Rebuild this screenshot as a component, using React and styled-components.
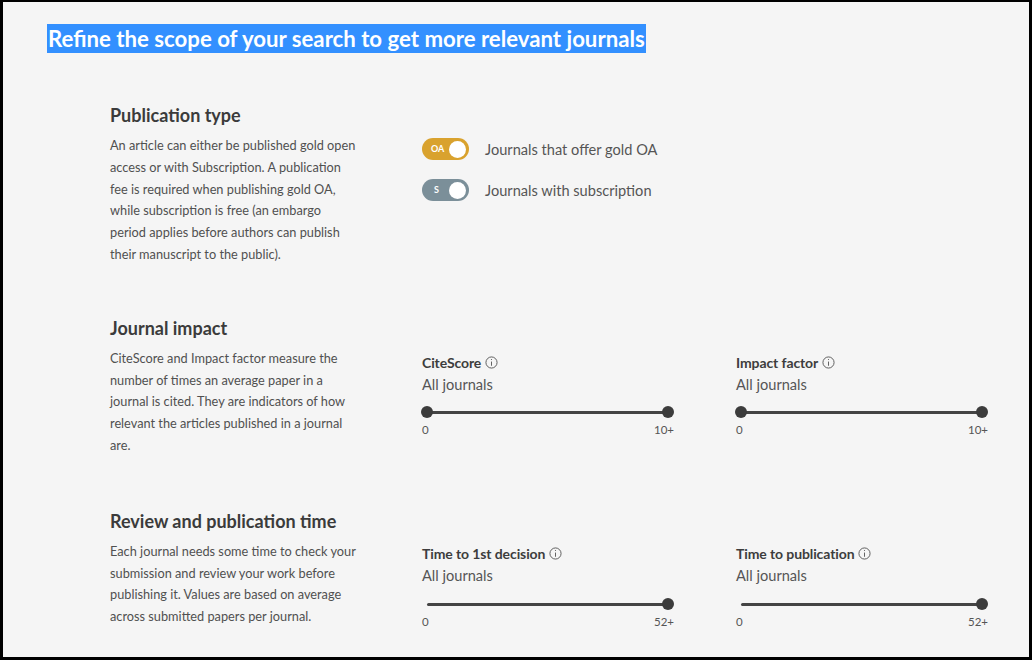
import React from 'react';
import styled, { createGlobalStyle } from 'styled-components';

const GlobalStyle = createGlobalStyle`
  html, body {
    margin: 0;
    padding: 0;
    background: #000;
  }
  body {
    font-family: Lato, "Open Sans", sans-serif;
  }
`;

const Frame = styled.div`
  box-sizing: border-box;
  width: 1032px;
  height: 660px;
  border: 3px solid #000;
  border-top-width: 2px;
  background: #f5f5f5;
  overflow: hidden;
  padding: 22px 0 0 44px;
`;

const Banner = styled.h1`
  display: inline-block;
  margin: 0;
  padding: 0 1px;
  height: 29px;
  line-height: 29px;
  background: #3390ff;
  color: #fff;
  font-family: Lato, sans-serif;
  font-size: 22.2px;
  font-weight: 700;
  letter-spacing: 0;
`;

const Sections = styled.div`
  display: flex;
  flex-direction: column;
  padding: 50px 0 0 63px;
`;

const Section = styled.section`
  display: grid;
  grid-template-columns: 248px 1fr;
  column-gap: 64px;
  margin-bottom: ${p => p.$gap || 0}px;
`;

const SectionTitle = styled.h2`
  grid-column: 1 / -1;
  margin: 0 0 8px;
  font-size: 18px;
  line-height: 24px;
  font-weight: 700;
  color: #3b3b3b;
`;

const Description = styled.p`
  margin: 0;
  font-size: 12.75px;
  line-height: 21.8px;
  color: #505050;
`;

const ToggleList = styled.div`
  display: flex;
  flex-direction: column;
  gap: 19px;
  padding-top: 3px;
`;

const ToggleRow = styled.label`
  display: flex;
  align-items: center;
  gap: 16px;
  font-size: 14.6px;
  color: #555;
`;

const Toggle = styled.span`
  position: relative;
  box-sizing: border-box;
  width: 47px;
  height: 22px;
  border-radius: 11px;
  background: ${p => p.$color};
  color: #fff;
  font-size: 9px;
  font-weight: 700;
  line-height: 22px;
  padding-left: ${p => p.$pad}px;

  &::after {
    content: '';
    position: absolute;
    right: 3px;
    top: 2.5px;
    width: 17px;
    height: 17px;
    border-radius: 50%;
    background: #fff;
  }
`;

const Filters = styled.div`
  display: grid;
  grid-template-columns: 253px 253px;
  column-gap: 61px;
  padding-top: ${p => p.$offset}px;
`;

const Filter = styled.div`
  display: flex;
  flex-direction: column;
`;

const FilterLabel = styled.div`
  display: flex;
  align-items: center;
  gap: 4px;
  font-size: 14px;
  line-height: 20px;
  font-weight: 700;
  color: #3d3d3d;
  letter-spacing: -0.1px;
`;

const FilterValue = styled.div`
  font-size: 14.6px;
  line-height: 23px;
  color: #555;
`;

const Track = styled.div`
  position: relative;
  margin: ${p => p.$space}px 7px 0 5px;
  height: 3px;
  border-radius: 2px;
  background: #444;
`;

const Thumb = styled.span`
  position: absolute;
  top: -4.5px;
  ${p => (p.$side === 'left' ? 'left: -6px;' : 'right: -6px;')}
  width: 12px;
  height: 12px;
  border-radius: 50%;
  background: #3c3c3c;
`;

const Scale = styled.div`
  display: flex;
  justify-content: space-between;
  margin-top: 9px;
  padding-right: 1px;
  font-size: 11.5px;
  color: #555;
`;

const InfoIcon = () => (
  <svg width="13" height="13" viewBox="0 0 14 14" fill="none" stroke="#555" strokeWidth="1">
    <circle cx="7" cy="7" r="6" />
    <line x1="7" y1="6" x2="7" y2="10.5" />
    <circle cx="7" cy="3.8" r="0.6" fill="#555" stroke="none" />
  </svg>
);

const RangeFilter = ({ label, max, showMin = true, space = 15 }) => (
  <Filter>
    <FilterLabel>
      {label}
      <InfoIcon />
    </FilterLabel>
    <FilterValue>All journals</FilterValue>
    <Track $space={space}>
      {showMin && <Thumb $side="left" />}
      <Thumb $side="right" />
    </Track>
    <Scale>
      <span>0</span>
      <span>{max}</span>
    </Scale>
  </Filter>
);

const App = () => (
  <>
    <GlobalStyle />
    <Frame>
      <Banner>Refine the scope of your search to get more relevant journals</Banner>
      <Sections>
        <Section $gap={50}>
          <SectionTitle>Publication type</SectionTitle>
          <Description>
            An article can either be published gold open access or with Subscription. A
            publication fee is required when publishing gold OA, while subscription is free (an
            embargo period applies before authors can publish their manuscript to the public).
          </Description>
          <ToggleList>
            <ToggleRow>
              <Toggle $color="#d9a22e" $pad={9}>OA</Toggle>
              Journals that offer gold OA
            </ToggleRow>
            <ToggleRow>
              <Toggle $color="#7b8f99" $pad={12}>S</Toggle>
              Journals with subscription
            </ToggleRow>
          </ToggleList>
        </Section>

        <Section $gap={52}>
          <SectionTitle>Journal impact</SectionTitle>
          <Description>
            CiteScore and Impact factor measure the number of times an average paper in a
            journal is cited. They are indicators of how relevant the articles published in a
            journal are.
          </Description>
          <Filters $offset={5}>
            <RangeFilter label="CiteScore" max="10+" />
            <RangeFilter label="Impact factor" max="10+" />
          </Filters>
        </Section>

        <Section>
          <SectionTitle>Review and publication time</SectionTitle>
          <Description>
            Each journal needs some time to check your submission and review your work before
            publishing it. Values are based on average across submitted papers per journal.
          </Description>
          <Filters $offset={3}>
            <RangeFilter label="Time to 1st decision" max="52+" showMin={false} space={16} />
            <RangeFilter label="Time to publication" max="52+" showMin={false} space={16} />
          </Filters>
        </Section>
      </Sections>
    </Frame>
  </>
);

export default App;
